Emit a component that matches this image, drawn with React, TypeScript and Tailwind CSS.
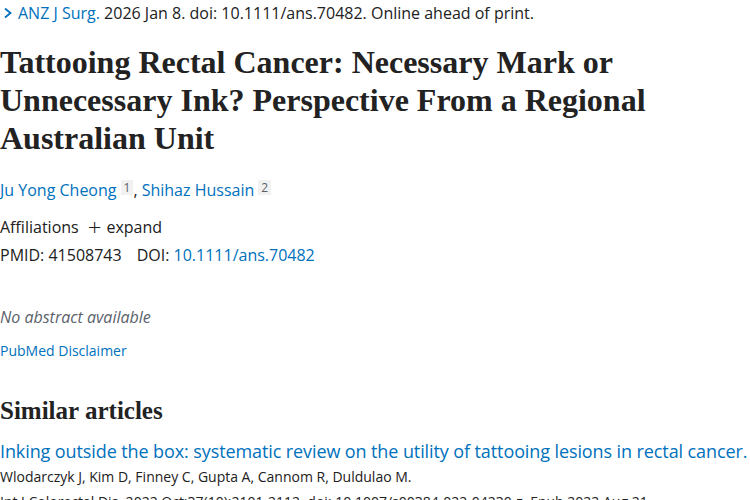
import React from "react";

export default function App() {
  return (
    <div className="w-[750px] h-[500px] overflow-hidden bg-white text-[#212121] font-['Open_Sans',sans-serif]">
      <div className="pt-[1px] flex items-center text-[16px] leading-[24px] text-[#212121]">
        <svg width="12" height="14" viewBox="0 0 12 14" className="ml-[2px] mr-[4px]">
          <path d="M3 2.5 L8.5 7 L3 11.5" fill="none" stroke="#0071bc" strokeWidth="1.8" />
        </svg>
        <span className="text-[#0071bc]">ANZ J Surg.</span>
        <span>&nbsp;2026 Jan 8. doi: 10.1111/ans.70482. Online ahead of print.</span>
      </div>

      <h1 className="mt-[18px] font-['Liberation_Serif',serif] font-bold text-[32px] leading-[38px] text-[#222222] w-[680px]">
        Tattooing Rectal Cancer: Necessary Mark or Unnecessary Ink? Perspective From a Regional Australian Unit
      </h1>

      <div className="mt-[21px] text-[16px] leading-[24px] flex items-center">
        <span className="text-[#0071bc]">Ju Yong Cheong</span>
        <span className="ml-[4px] mb-[6px] px-[3px] bg-[#f1f1f1] text-[12px] leading-[15px] text-[#5b616b]">1</span>
        <span>,&nbsp;</span>
        <span className="text-[#0071bc]">Shihaz Hussain</span>
        <span className="ml-[4px] mb-[6px] px-[3px] bg-[#f1f1f1] text-[12px] leading-[15px] text-[#5b616b]">2</span>
      </div>

      <div className="mt-[13px] text-[16px] leading-[24px] flex items-center">
        <span>Affiliations</span>
        <span className="ml-[9px] text-[24px] leading-[20px] font-light">+</span>
        <span className="ml-[5px]">expand</span>
      </div>

      <div className="mt-[4px] text-[16px] leading-[24px]">
        <span>PMID: 41508743</span>
        <span className="ml-[15px]">DOI: </span>
        <span className="text-[#0071bc]">10.1111/ans.70482</span>
      </div>

      <div className="mt-[38px] text-[16px] leading-[24px] italic text-[#5b616b]">
        No abstract available
      </div>

      <div className="mt-[12px] text-[14px] leading-[20px] text-[#0071bc]">PubMed Disclaimer</div>

      <h2 className="mt-[35px] font-['Liberation_Serif',serif] font-bold text-[25px] leading-[30px] text-[#222222]">
        Similar articles
      </h2>

      <div className="mt-[13px] text-[18px] leading-[24px] text-[#0071bc] whitespace-nowrap tracking-[-0.1px]">
        Inking outside the box: systematic review on the utility of tattooing lesions in rectal cancer.
      </div>
      <div className="mt-[4px] text-[14px] leading-[20px] whitespace-nowrap">
        Wlodarczyk J, Kim D, Finney C, Gupta A, Cannom R, Duldulao M.
      </div>
      <div className="mt-[5px] text-[14px] leading-[20px] whitespace-nowrap text-[#212121]">
        Int J Colorectal Dis. 2022 Oct;37(10):2101-2112. doi: 10.1007/s00384-022-04230-z. Epub 2022 Aug 21.
      </div>
    </div>
  );
}
